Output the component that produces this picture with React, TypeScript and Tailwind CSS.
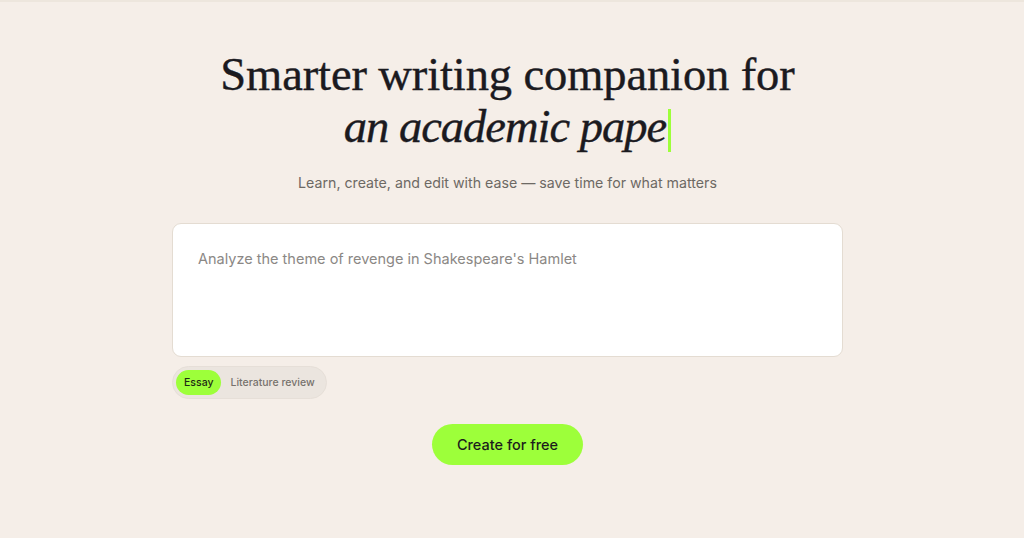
import React from "react";

export default function App() {
  return (
    <div className="min-h-[538px] w-full bg-[#f5eee8] border-t-2 border-[#ede6dd]" style={{ fontFamily: "Inter, 'Noto Sans', sans-serif" }}>
      <div className="flex flex-col items-center pr-[9px] pt-[47px]">
        <h1
          className="text-center text-[46.5px] leading-[52px] text-[#1b1a1f] tracking-[-0.1px] [-webkit-text-stroke:0.4px_#1b1a1f]"
          style={{ fontFamily: "'Liberation Serif', 'Times New Roman', serif" }}
        >
          <span className="block">Smarter writing companion for</span>
          <span className="block italic tracking-[-1px]">
            an academic pape
            <span className="inline-block w-[3px] h-[43px] bg-[#9dff3a] align-[-10px] ml-[2px] [-webkit-text-stroke:0]" />
          </span>
        </h1>
        <p className="mt-[20px] text-[14.2px] leading-[20px] text-[#6d6964]">
          Learn, create, and edit with ease — save time for what matters
        </p>
        <div className="mt-[30px] w-[671px]">
          <div className="h-[134px] rounded-[9px] border border-[#e4dcd2] bg-white px-[25px] pt-[23px]">
            <p className="text-[14.5px] leading-[24px] text-[#8b8885]">
              Analyze the theme of revenge in Shakespeare's Hamlet
            </p>
          </div>
          <div className="mt-[9px] inline-flex items-center gap-[1px] rounded-full bg-[#ebe5df] border border-[#e6dfd8] p-[3px]">
            <span className="rounded-full bg-[#9dff3a] px-[8px] py-[5px] text-[10.5px] leading-[15px] font-medium text-[#1e2a14]">
              Essay
            </span>
            <span className="rounded-full px-[8px] py-[5px] text-[10.5px] leading-[15px] font-medium text-[#77726d]">
              Literature review
            </span>
          </div>
        </div>
        <button className="mt-[25px] h-[41px] w-[151px] rounded-full bg-[#9dff3a] text-[14.5px] font-medium text-[#1c1c1c]">
          Create for free
        </button>
      </div>
    </div>
  );
}
